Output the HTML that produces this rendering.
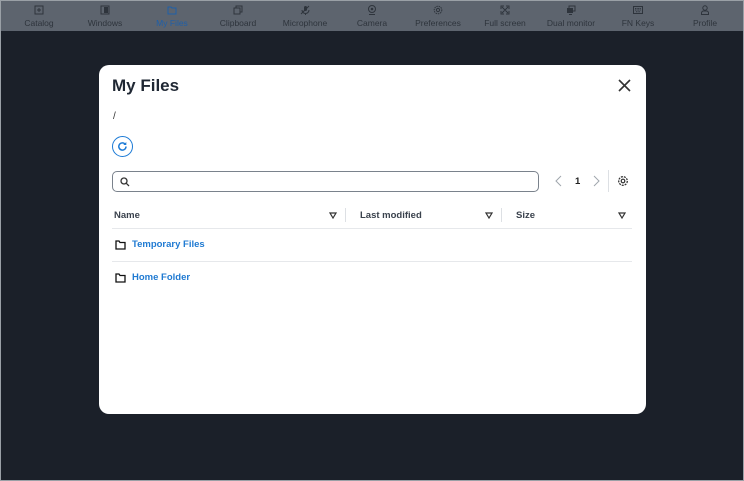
<!DOCTYPE html>
<html><head><meta charset="utf-8"><style>
*{box-sizing:border-box;margin:0;padding:0}
body{width:744px;height:481px;background:#1b2029;font-family:"Liberation Sans",sans-serif;position:relative;overflow:hidden}
.bd{position:absolute;left:0;top:0;width:744px;height:481px;border:1px solid #9aa0a6;pointer-events:none}
.tb{position:absolute;left:0;top:0;width:744px;height:31px;background:#5d646e}
.it{position:absolute;top:0;width:66px;margin-left:-33px;text-align:center;color:#2e343c;font-size:8.5px}
.it svg{display:block;margin:5px auto 3px;width:10px;height:10px}
.it.a{color:#1f5fa8}
.m{position:absolute;left:99px;top:65px;width:547px;height:349px;background:#fff;border-radius:10px}
.t{position:absolute;left:13px;top:11px;font-size:17px;font-weight:bold;color:#1f2733}
.x{position:absolute;left:519px;top:14px}
.sl{position:absolute;left:14px;top:46px;font-size:10px;color:#333}
.rf{position:absolute;left:13px;top:71px;width:21px;height:21px;border:1px solid #1b7ad6;border-radius:50%}
.sr{position:absolute;left:13px;top:106px;width:427px;height:21px;border:1px solid #7a828c;border-radius:5px}
.hd{position:absolute;top:145px;font-size:9.5px;font-weight:bold;color:#3a424d}
.ln{position:absolute;left:13px;width:520px;height:1px;background:#e6e8eb}
.vd{position:absolute;top:143px;width:1px;height:14px;background:#dde0e4}
.f{position:absolute;left:16px;font-size:9.5px;font-weight:bold;color:#1f7ad2}
.f svg{position:absolute;left:0;top:1px}
.f span{margin-left:17px}
</style></head><body>
<div class="tb">
<div class="it" style="left:39px"><svg viewBox="0 0 10 10"><rect x="1" y="1" width="8" height="8" fill="none" stroke="#2e343c"/><path d="M5 3v4M3 5h4" stroke="#2e343c"/></svg>Catalog</div>
<div class="it" style="left:105px"><svg viewBox="0 0 10 10"><rect x="1" y="1" width="8" height="8" fill="none" stroke="#2e343c"/><rect x="4" y="2" width="4" height="6" fill="#2e343c"/></svg>Windows</div>
<div class="it a" style="left:172px"><svg viewBox="0 0 10 10"><path d="M1 2h3l1 1h4v6H1z" fill="none" stroke="#1f5fa8"/></svg>My Files</div>
<div class="it" style="left:238px"><svg viewBox="0 0 10 10"><rect x="1" y="3" width="6" height="6" fill="none" stroke="#2e343c"/><path d="M3 3V1h6v6H7" fill="none" stroke="#2e343c"/></svg>Clipboard</div>
<div class="it" style="left:305px"><svg viewBox="0 0 10 10"><rect x="4" y="1" width="3" height="5" rx="1.5" fill="#2e343c"/><path d="M2 5a3.5 3.5 0 0 0 7 0M5.5 8v2M1 9l8-8" stroke="#2e343c" fill="none"/></svg>Microphone</div>
<div class="it" style="left:372px"><svg viewBox="0 0 10 10"><circle cx="5" cy="4" r="3.5" fill="none" stroke="#2e343c"/><circle cx="5" cy="4" r="1.3" fill="#2e343c"/><path d="M2 9.5h6" stroke="#2e343c"/></svg>Camera</div>
<div class="it" style="left:438px"><svg viewBox="0 0 10 10"><circle cx="5" cy="5" r="3.8" fill="none" stroke="#2e343c" stroke-dasharray="1.5 0.8"/><circle cx="5" cy="5" r="1.6" fill="none" stroke="#2e343c"/></svg>Preferences</div>
<div class="it" style="left:505px"><svg viewBox="0 0 10 10"><path d="M1 4V1h3M6 1h3v3M9 6v3H6M4 9H1V6M2 2l6 6M8 2L2 8" stroke="#2e343c" fill="none"/></svg>Full screen</div>
<div class="it" style="left:571px"><svg viewBox="0 0 10 10"><rect x="1" y="3" width="6" height="5" fill="#2e343c"/><path d="M3 3V1h6v5H7M3 9.5h3" stroke="#2e343c" fill="none"/></svg>Dual monitor</div>
<div class="it" style="left:638px"><svg viewBox="0 0 10 10"><rect x="0.5" y="1.5" width="9" height="7" fill="none" stroke="#2e343c"/><path d="M2 3.5h6M2 5h6M3 6.8h4" stroke="#2e343c" stroke-dasharray="1 0.6"/></svg>FN Keys</div>
<div class="it" style="left:705px"><svg viewBox="0 0 10 10"><circle cx="5" cy="3" r="2.2" fill="none" stroke="#2e343c"/><path d="M1.5 9.5V8a2 2 0 0 1 2-2h3a2 2 0 0 1 2 2v1.5z" fill="none" stroke="#2e343c"/></svg>Profile</div>
</div>
<div class="m">
<div class="t">My Files</div>
<svg class="x" width="13" height="13" viewBox="0 0 13 13"><path d="M1 1l11 11M12 1L1 12" stroke="#333" stroke-width="1.6"/></svg>
<div class="sl">/</div>
<div class="rf"><svg width="19" height="19" viewBox="0 0 19 19"><path d="M13 9.5a3.6 3.6 0 1 1-1.2-2.7" fill="none" stroke="#1b7ad6" stroke-width="1.5"/><path d="M13.3 5v3h-3z" fill="#1b7ad6"/></svg></div>
<div class="sr"><svg style="position:absolute;left:7px;top:5px" width="10" height="10" viewBox="0 0 10 10"><circle cx="4" cy="4" r="3" fill="none" stroke="#333" stroke-width="1.3"/><path d="M6.3 6.3L9 9" stroke="#333" stroke-width="1.3"/></svg></div>
<svg style="position:absolute;left:456px;top:110px" width="8" height="12" viewBox="0 0 8 12"><path d="M6 1L1 6l5 5" stroke="#a0a6ad" fill="none"/></svg>
<div style="position:absolute;left:476px;top:111px;font-size:9.5px;font-weight:bold;color:#222">1</div>
<svg style="position:absolute;left:493px;top:110px" width="8" height="12" viewBox="0 0 8 12"><path d="M2 1l5 5-5 5" stroke="#a0a6ad" fill="none"/></svg>
<div style="position:absolute;left:509px;top:105px;width:1px;height:22px;background:#dde0e4"></div>
<svg style="position:absolute;left:518px;top:110px" width="12" height="12" viewBox="0 0 12 12"><circle cx="6" cy="6" r="4.3" fill="none" stroke="#333" stroke-width="1.3" stroke-dasharray="2 1"/><circle cx="6" cy="6" r="1.8" fill="none" stroke="#333" stroke-width="1.2"/></svg>
<div class="hd" style="left:15px">Name</div>
<div class="hd" style="left:261px">Last modified</div>
<div class="hd" style="left:417px">Size</div>
<svg style="position:absolute;left:230px;top:147px" width="8" height="7"><path d="M1 1h6L4 6z" fill="none" stroke="#333" stroke-width="1.2"/></svg>
<svg style="position:absolute;left:386px;top:147px" width="8" height="7"><path d="M1 1h6L4 6z" fill="none" stroke="#333" stroke-width="1.2"/></svg>
<svg style="position:absolute;left:519px;top:147px" width="8" height="7"><path d="M1 1h6L4 6z" fill="none" stroke="#333" stroke-width="1.2"/></svg>
<div class="vd" style="left:246px"></div><div class="vd" style="left:402px"></div>
<div class="ln" style="top:163px"></div>
<div class="ln" style="top:196px"></div>
<div class="f" style="top:174px"><svg width="11" height="10" viewBox="0 0 11 10"><path d="M1 1h3l1 1.5h5V9H1z" fill="none" stroke="#111" stroke-width="1.3"/></svg><span>Temporary Files</span></div>
<div class="f" style="top:207px"><svg width="11" height="10" viewBox="0 0 11 10"><path d="M1 1h3l1 1.5h5V9H1z" fill="none" stroke="#111" stroke-width="1.3"/></svg><span>Home Folder</span></div>
</div>
<div class="bd"></div>
</body></html>
